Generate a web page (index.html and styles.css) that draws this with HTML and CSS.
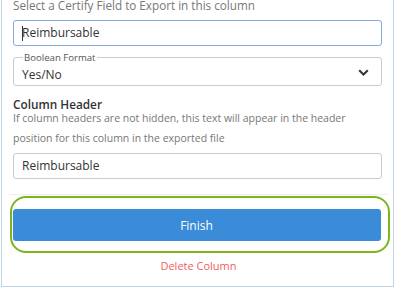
FILE: index.html
```html
<!DOCTYPE html>
<html lang="en">
<head>
    <meta charset="UTF-8">
    <meta name="viewport" content="width=device-width, initial-scale=1.0">
    <title>Export Column</title>
    <link rel="stylesheet" href="styles.css">
</head>
<body>
    <div class="panel">
        <div class="content">
            <p class="hint top-hint">Select a Certify Field to Export in this column</p>
            <div class="field focused">
                <span class="caret"></span>Reimbursable
            </div>

            <div class="select-box">
                <span class="select-label">Boolean Format</span>
                <span class="select-value">Yes/No</span>
                <svg class="chevron" width="11" height="7" viewBox="0 0 11 7">
                    <path d="M1.2 1.2 L5.5 5.5 L9.8 1.2" fill="none" stroke="#333" stroke-width="2"/>
                </svg>
            </div>

            <h3 class="section-title">Column Header</h3>
            <p class="hint desc">If column headers are not hidden, this text will appear in the header position for this column in the exported file</p>
            <div class="field small">Reimbursable</div>
        </div>

        <div class="actions">
            <div class="highlight">
                <button class="finish-button">Finish</button>
            </div>
            <a class="delete-link">Delete Column</a>
        </div>
    </div>
</body>
</html>
```

FILE: styles.css
```css
body {
    margin: 0;
    font-family: "Open Sans", Arial, sans-serif;
    background-color: #fff;
    color: #333;
    overflow: hidden;
}

.panel {
    width: 391px;
    height: 286px;
    margin-left: 1px;
    border-left: 1px solid #bcd6e8;
    border-right: 1px solid #bcd6e8;
    border-bottom: 1px solid #bcd6e8;
    overflow: hidden;
}

.content {
    padding: 0 11px 0 11px;
}

.hint {
    margin: 0;
    color: #777;
}

.top-hint {
    margin-top: -3px;
    font-size: 11.7px;
    line-height: 16px;
}

.field {
    box-sizing: border-box;
    height: 26px;
    margin-top: 7px;
    padding: 0 8px;
    border: 1px solid #ccc;
    border-radius: 3px;
    font-size: 12px;
    line-height: 24px;
    color: #333;
    display: flex;
    align-items: center;
}

.field.focused {
    border-color: #86a8e3;
}

.caret {
    display: inline-block;
    width: 1px;
    height: 15px;
    background-color: #333;
    margin-right: -1px;
}

.field.small {
    margin-top: 5px;
}

.select-box {
    position: relative;
    box-sizing: border-box;
    height: 29px;
    margin-top: 11px;
    padding: 6px 8px 0 8px;
    border: 1px solid #ccc;
    border-radius: 3px;
    display: flex;
    align-items: center;
    justify-content: space-between;
}

.select-label {
    position: absolute;
    top: -5px;
    left: 9px;
    padding: 0 1px;
    background-color: #fff;
    font-size: 9.6px;
    line-height: 10px;
    color: #555;
}

.select-value {
    font-size: 12px;
    line-height: 18px;
}

.chevron {
    margin-right: 4px;
    margin-top: -4px;
}

.section-title {
    margin: 10px 0 0 0;
    font-size: 11.8px;
    font-weight: 600;
    line-height: 16px;
    color: #333;
}

.desc {
    font-size: 10.5px;
    line-height: 20px;
    margin-top: -4px;
}

.actions {
    margin: 15px 5px 0 7px;
    border-top: 1px solid #eee;
    display: flex;
    flex-direction: column;
    align-items: center;
}

.highlight {
    box-sizing: border-box;
    width: 380px;
    margin-top: 1px;
    margin-left: 2px;
    border: 2.5px solid #7db51a;
    border-radius: 16px;
    padding: 11px 7px 10px 1px;
}

.finish-button {
    display: block;
    width: 100%;
    height: 32px;
    border: none;
    border-radius: 3px;
    background-color: #3a8bd8;
    color: #fff;
    font-family: "Open Sans", Arial, sans-serif;
    font-size: 12px;
}

.delete-link {
    margin-top: 5px;
    font-size: 11px;
    color: #f06060;
}
```
